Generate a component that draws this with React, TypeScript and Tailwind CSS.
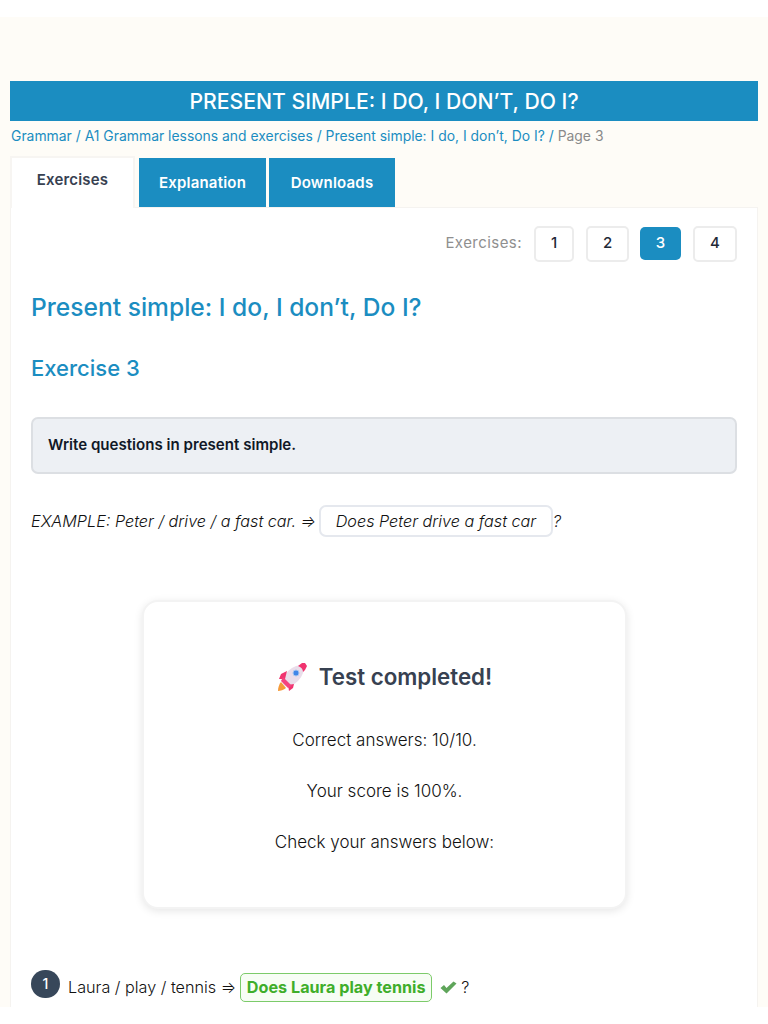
export default function App() {
  const blue = "bg-[#1b8dc1]";
  return (
    <div className="h-[1024px] bg-white overflow-hidden font-['Inter',sans-serif] text-[#1f2937]">
      <div className="h-[990px] mt-[17px] bg-[#fefcf7] px-[10px] pt-[64px] overflow-hidden">
        <h1 className={`${blue} h-[40px] pt-[1px] flex items-center justify-center text-white text-[21.2px] font-medium`}>
          PRESENT SIMPLE: I DO, I DON’T, DO I?
        </h1>
        <div className="h-[31px] pl-[1px] flex items-center text-[13.92px] text-[#1b8dc1] whitespace-pre">
          Grammar / A1 Grammar lessons and exercises / Present simple: I do, I don’t, Do I? / <span className="text-[#8a8a8a]">Page 3</span>
        </div>
        <div className="flex items-end h-[55px] relative z-10">
          <div className="w-[125px] h-[52px] mb-[-1px] bg-white border-2 border-b-0 border-[#f7f5f2] flex justify-center pt-[11px] text-[15px] font-semibold tracking-[0.2px] text-[#374151]">
            Exercises
          </div>
          <div className={`${blue} ml-[4px] w-[127px] h-[49px] pt-[1px] flex items-center justify-center text-white text-[15px] font-semibold tracking-[0.2px]`}>
            Explanation
          </div>
          <div className={`${blue} ml-[3px] w-[126px] h-[49px] pt-[1px] flex items-center justify-center text-white text-[15px] font-semibold tracking-[0.2px]`}>
            Downloads
          </div>
        </div>
        <div className="bg-white border border-[#f5f3f0] h-[810px] px-[20px]">
          <div className="flex items-center justify-end pt-[18px] h-[53px] text-[15px] font-medium">
            <span className="text-[#8f8f8f] text-[15px] font-normal tracking-[0.45px] mr-[12px]">Exercises:</span>
            <span className="w-[40px] h-[36px] rounded-[5px] border-2 border-[#ececec] flex items-center justify-center mr-[12px]">1</span>
            <span className="w-[43px] h-[36px] rounded-[5px] border-2 border-[#ececec] flex items-center justify-center mr-[11px]">2</span>
            <span className={`${blue} w-[41px] h-[33px] rounded-[5px] text-white flex items-center justify-center mr-[12px]`}>3</span>
            <span className="w-[44px] h-[36px] rounded-[5px] border-2 border-[#ececec] flex items-center justify-center">4</span>
          </div>
          <h2 className="mt-[29px] text-[24.6px] leading-[34px] font-medium text-[#1b8dc1]">Present simple: I do, I don’t, Do I?</h2>
          <h3 className="mt-[27px] text-[22px] leading-[34px] font-medium text-[#1b8dc1]">Exercise 3</h3>
          <div className="mt-[32px] h-[57px] bg-[#edf0f4] border-2 border-[#dcdfe3] rounded-[7px] pl-[15px] flex items-center text-[15.1px] font-semibold text-[#111827]">
            Write questions in present simple.
          </div>
          <div className="mt-[31px] flex items-center h-[32px] text-[16.2px] italic font-light text-[#111]">
            <span>EXAMPLE: Peter / drive / a fast car. ⇒</span>
            <span className="ml-[3px] w-[234px] h-[32px] border-2 border-[#e5e8ee] rounded-[7px] flex items-center justify-center">Does Peter drive a fast car</span>
            <span>?</span>
          </div>
          <div className="mt-[63px] ml-[111px] w-[485px] h-[309px] bg-white border-2 border-[#f3f3f3] rounded-[16px] shadow-[0_2px_8px_rgba(0,0,0,0.1)] flex flex-col items-center pt-[55px] text-[17px] font-light text-[#111]">
            <div className="flex items-center h-[40px] text-[22.3px] font-semibold text-[#374151]">
              <svg width="31" height="30" viewBox="0 0 31 30" className="mr-[11px] mt-[-1px]">
                <ellipse cx="16" cy="14" rx="13" ry="7" transform="rotate(-45 16 14)" fill="#eaddea" />
                <path d="M21 4 L25 1 L28 1 L30 4 L28 8 L26 10 C26 7 24 5 21 4Z" fill="#f0336f" />
                <path d="M10 9 L4 12 L2 17 L8 17Z" fill="#f0336f" />
                <path d="M17 22 L16 26 L12 29 L11 23Z" fill="#f0336f" />
                <path d="M6 15 L15 24 L11 26 L4 19Z" fill="#f4427f" />
                <path d="M4 20 L9 26 C7 28 3 29 1 29 C1 26 2 22 4 20Z" fill="#f59a38" />
                <circle cx="19" cy="11" r="3" fill="#3f86e8" stroke="#a9c6f0" strokeWidth="1" />
              </svg>
              Test completed!
            </div>
            <p className="mt-[31px] leading-[24px]">Correct answers: 10/10.</p>
            <p className="mt-[27px] leading-[24px]">Your score is 100%.</p>
            <p className="mt-[27px] leading-[24px]">Check your answers below:</p>
          </div>
          <div className="mt-[62px] flex items-center h-[32px] text-[16.2px] font-light text-[#111]">
            <span className="w-[29px] h-[28px] rounded-full bg-[#37475a] text-white text-[14px] font-medium flex items-center justify-center mr-[8px] mt-[-7px]">1</span>
            <span>Laura / play / tennis ⇒</span>
            <span className="ml-[4px] w-[192px] h-[29px] border border-[#7ccb6a] rounded-[5px] bg-[#f7fdf5] flex items-center justify-center text-[16.2px] text-[#3fae2a] font-bold">Does Laura play tennis</span>
            <svg width="17" height="15" viewBox="0 0 17 15" className="ml-[8px] mr-[4px]">
              <path d="M0.5 8 L4 5 L6.5 8 L13.5 1.5 L16.5 3.5 L6.5 13.5 Z" fill="#5fa55a" />
            </svg>
            <span>?</span>
          </div>
        </div>
      </div>
    </div>
  );
}
